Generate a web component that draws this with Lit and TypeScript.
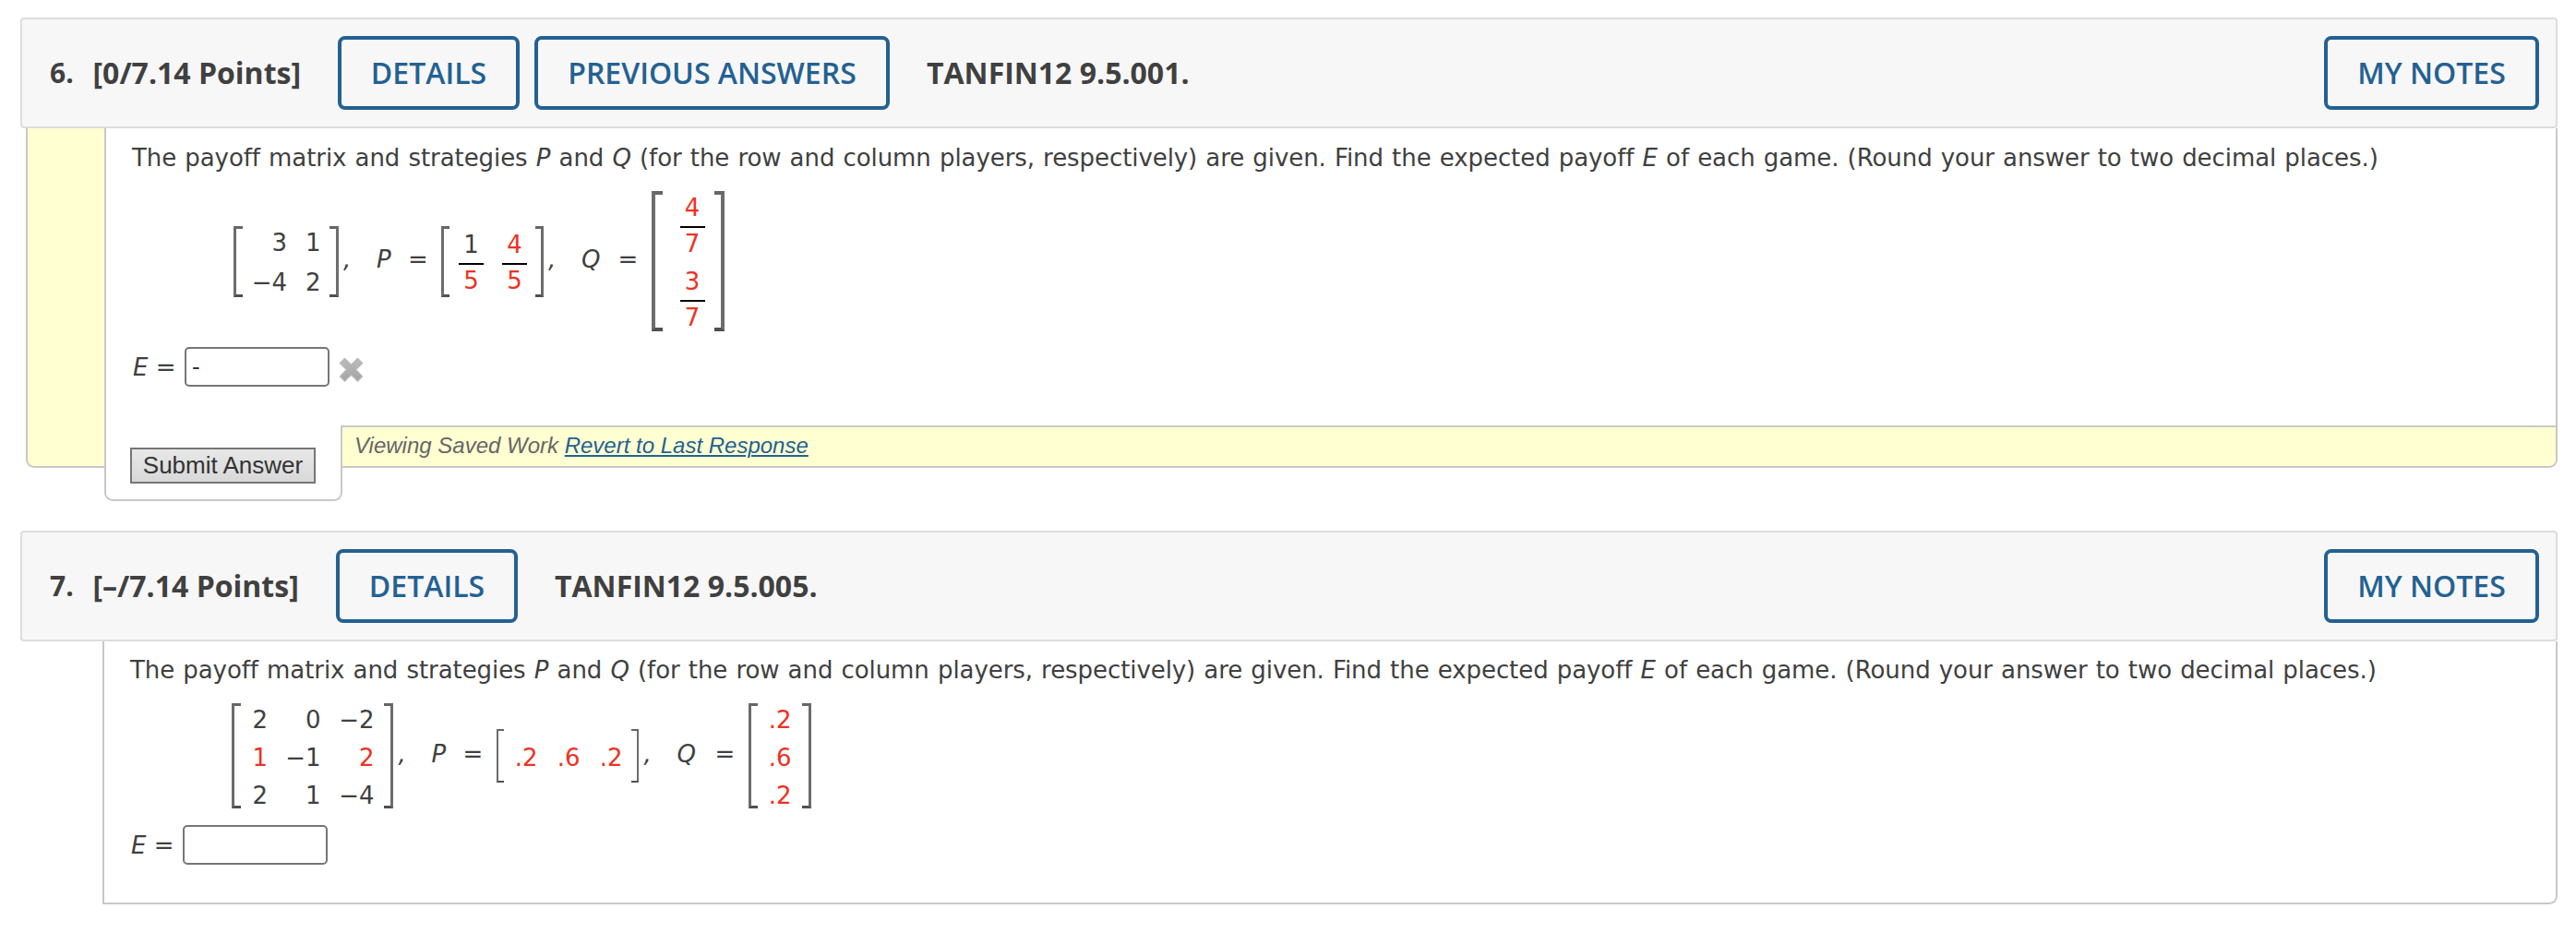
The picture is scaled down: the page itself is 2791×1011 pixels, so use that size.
import { LitElement, html, css, nothing, type TemplateResult } from "lit";
import { customElement, property } from "lit/decorators.js";

type Cell = { text: string; hot?: boolean };
type Fraction = { num: Cell; den: Cell };

const c = (text: string): Cell => ({ text });
const r = (text: string): Cell => ({ text, hot: true });

@customElement("math-matrix")
export class MathMatrix extends LitElement {
  @property({ attribute: false }) cells: Cell[] = [];
  @property({ attribute: false }) fractions: Fraction[] = [];
  @property() kind = "";

  static styles = css`
    :host { display: block; }
    .matrix { display: flex; align-items: center; }
    .bracket {
      box-sizing: border-box;
      align-self: stretch;
      width: 10px;
      border: 3px solid #6c6c6e;
      border-top-color: #666;
      border-bottom-color: #505050;
    }
    .left { border-right: 0; }
    .right { border-left: 0; }
    .grid { display: grid; text-align: right; margin-top: 4px; }
    .hot { color: #ee3124; }

    .two { height: 77px; }
    .two .grid { grid-template-columns: 48px 36.5px; padding-right: 9.5px; line-height: 43px; }

    .three { height: 114px; }
    .three .grid { grid-template-columns: 29px 57.5px 58px; padding-right: 10px; line-height: 41px; }

    .row { height: 58px; }
    .row .bracket { width: 8px; border-width: 2px; }
    .row .left { border-right: 0; }
    .row .right { border-left: 0; }
    .row .grid { grid-template-columns: 37px 46px 46px; padding-right: 9px; line-height: 41px; }

    .col { height: 114px; }
    .col .grid { grid-template-columns: 37px; padding-right: 11px; line-height: 41px; }

    .fracs { display: flex; }
    .frac { width: 27px; text-align: center; line-height: 28px; }
    .bar { height: 2px; margin: 6px 0 3px; background: #000; }

    .frow { height: 77px; }
    .frow .fracs { gap: 20px; padding: 3px 9px 0 10px; }
    .frow .bracket { width: 9px; }
    .frow .left { border-right: 0; }
    .frow .right { border-left: 0; }

    .fcol { height: 152px; }
    .fcol .fracs { flex-direction: column; gap: 13px; padding: 3px 10px 0 19px; }
    .fcol .bracket { width: 11px; border-width: 4px; }
    .fcol .left { border-right: 0; width: 12px; }
    .fcol .right { border-left: 0; }
  `;

  private cell(v: Cell) {
    return html`<div class=${v.hot ? "hot" : ""}>${v.text}</div>`;
  }

  render() {
    return html`
      <div class="matrix ${this.kind}">
        <div class="bracket left"></div>
        ${this.fractions.length
          ? html`<div class="fracs">
              ${this.fractions.map(
                (f) => html`<div class="frac">${this.cell(f.num)}<div class="bar"></div>${this.cell(f.den)}</div>`
              )}
            </div>`
          : html`<div class="grid">${this.cells.map((v) => this.cell(v))}</div>`}
        <div class="bracket right"></div>
      </div>
    `;
  }
}

@customElement("question-header")
export class QuestionHeader extends LitElement {
  @property() number = "";
  @property() points = "";
  @property() code = "";
  @property({ type: Boolean }) previous = false;

  static styles = css`
    :host { display: block; }
    .header {
      box-sizing: border-box;
      height: 120px;
      display: flex;
      align-items: center;
      padding: 0 18px 0 30px;
      background: #f7f7f7;
      border: 2px solid #ddd;
      border-radius: 4px;
      font: 700 32px/44px "Open Sans", sans-serif;
      color: #404040;
      white-space: nowrap;
    }
    .number { width: 46.5px; font-size: 30px; }
    .points { width: 263.5px; }
    .points.graded { width: 265.500px; }
    .btn {
      box-sizing: border-box;
      height: 80px;
      padding: 0;
      border: 4px solid #236192;
      border-radius: 8px;
      background: transparent;
      color: #236192;
      font: 600 32px/44px "Open Sans", sans-serif;
    }
    .details { width: 197px; }
    .prev { width: 385px; margin-left: 16px; }
    .notes { width: 233px; margin-left: auto; }
    .code { margin-left: 40px; }
  `;

  render() {
    return html`
      <div class="header">
        <span class="number">${this.number}</span>
        <span class="points ${this.previous ? "graded" : ""}">${this.points}</span>
        <button class="btn details">DETAILS</button>
        ${this.previous ? html`<button class="btn prev">PREVIOUS ANSWERS</button>` : nothing}
        <span class="code">${this.code}</span>
        <button class="btn notes">MY NOTES</button>
      </div>
    `;
  }
}

@customElement("app-root")
export class AppRoot extends LitElement {
  static styles = css`
    :host {
      display: block;
      box-sizing: border-box;
      height: 1011px;
      padding: 19px 20px 0 22px;
      overflow: hidden;
      background: #fff;
      color: #404040;
      font: 26px/32px "DejaVu Sans", sans-serif;
    }
    .panel {
      box-sizing: border-box;
      border: 2px solid #c8c8c8;
      border-top: 0;
    }
    .saved {
      display: flex;
      height: 368px;
      margin: 0 0 68px 6px;
      padding-left: 83px;
      background: #ffffd2;
      border-radius: 0 0 9px 9px;
    }
    .column { flex: 1; display: flex; flex-direction: column; }
    .body { box-sizing: border-box; padding: 16px 0 0 28px; }
    .saved .body { height: 322px; background: #fff; border-left: 2px solid #c8c8c8; }
    .open { height: 285px; margin-left: 89px; border-bottom-right-radius: 9px; }
    .open .body { padding-top: 15px; }
    .prompt { white-space: nowrap; letter-spacing: -0.07px; word-spacing: 0.97px; }
    .math { display: flex; align-items: center; margin: 20px 0 0 110px; }
    .op { flex: none; margin-bottom: 4px; }
    .comma { width: 36px; padding-left: 5px; font-style: italic; }
    .open .comma { padding-left: 6px; }
    .p { width: 34px; font-style: italic; }
    .q { width: 39.5px; font-style: italic; }
    .open .q { width: 41px; }
    .eq { width: 36px; }
    .answer { display: flex; align-items: center; margin-top: 17px; height: 43px; }
    .open .answer { margin-top: 18px; }
    .label { box-sizing: border-box; width: 57px; padding-left: 1px; white-space: pre; }
    .field {
      box-sizing: border-box;
      width: 157px;
      height: 43px;
      margin: 0;
      padding: 2px 6px;
      border: 2px solid #767676;
      border-radius: 5px;
      background: #fff;
      color: #333;
      font: 26px "Liberation Sans", Arial, sans-serif;
    }
    .wrong { display: block; width: 28px; height: 30px; margin: 6px 0 0 9px; }
    .footer { display: flex; align-items: flex-start; }
    .tab {
      box-sizing: border-box;
      width: 258px;
      height: 82px;
      margin-bottom: -38px;
      padding: 24px 0 0 26px;
      background: #fff;
      border: 2px solid #c8c8c8;
      border-top: 0;
      border-radius: 0 0 9px 9px;
    }
    .submit {
      display: block;
      width: 201px;
      height: 39px;
      padding: 0 0 2px;
      border: 2px solid #767676;
      background: linear-gradient(#e8e8e8, #d8d8d8);
      color: #333;
      font: 26px/32px "Liberation Sans", Arial, sans-serif;
    }
    .notice {
      flex: 1;
      box-sizing: border-box;
      height: 44px;
      padding: 6px 0 0 13px;
      border-top: 2px solid #c8c8c8;
      color: #666;
      font: italic 24px/28px "Liberation Sans", Arial, sans-serif;
    }
    .notice a { color: #236192; text-decoration: underline; text-decoration-thickness: 2px; text-underline-offset: 2px; }
  `;

  private prompt(): TemplateResult {
    return html`<div class="prompt">The payoff matrix and strategies <i>P</i> and <i>Q</i> (for the row and column players, respectively) are given. Find the expected payoff <i>E</i> of each game. (Round your answer to two decimal places.)</div>`;
  }

  private assign(name: "P" | "Q"): TemplateResult {
    return html`<span class="op comma">,</span><span class="op ${name.toLowerCase()}">${name}</span><span class="op eq">=</span>`;
  }

  render() {
    return html`
      <question-header number="6." points="[0/7.14 Points]" code="TANFIN12 9.5.001." previous></question-header>
      <div class="panel saved">
        <div class="column">
          <div class="body">
            ${this.prompt()}
            <div class="math">
              <math-matrix kind="two" .cells=${[c("3"), c("1"), c("−4"), c("2")]}></math-matrix>
              ${this.assign("P")}
              <math-matrix kind="frow" .fractions=${[{ num: c("1"), den: r("5") }, { num: r("4"), den: r("5") }]}></math-matrix>
              ${this.assign("Q")}
              <math-matrix kind="fcol" .fractions=${[{ num: r("4"), den: r("7") }, { num: r("3"), den: r("7") }]}></math-matrix>
            </div>
            <div class="answer">
              <span class="label"><i>E</i> =</span>
              <input class="field" .value=${"-"} />
              <svg class="wrong" viewBox="0 0 28 30">
                <defs>
                  <linearGradient id="g" x1="0" y1="0" x2="0" y2="1">
                    <stop offset="0" stop-color="#bdbdbd" />
                    <stop offset="1" stop-color="#a2a2a2" />
                  </linearGradient>
                </defs>
                <path
                  fill="url(#g)"
                  stroke="#b8b8b8"
                  stroke-width="1.5"
                  stroke-linejoin="round"
                  d="M2.500 7.500 7.500 2.500 14.500 9.500 21.500 2.500 26.500 7.500 19.500 14.500 26.500 22 21.500 27 14.500 20 7.500 27 2.500 22 9.500 14.500Z"
                />
              </svg>
            </div>
          </div>
          <div class="footer">
            <div class="tab"><button class="submit">Submit Answer</button></div>
            <div class="notice">Viewing Saved Work <a>Revert to Last Response</a></div>
          </div>
        </div>
      </div>

      <question-header number="7." points="[–/7.14 Points]" code="TANFIN12 9.5.005."></question-header>
      <div class="panel open">
        <div class="body">
          ${this.prompt()}
          <div class="math">
            <math-matrix
              kind="three"
              .cells=${[c("2"), c("0"), c("−2"), r("1"), c("−1"), r("2"), c("2"), c("1"), c("−4")]}
            ></math-matrix>
            ${this.assign("P")}
            <math-matrix kind="row" .cells=${[r(".2"), r(".6"), r(".2")]}></math-matrix>
            ${this.assign("Q")}
            <math-matrix kind="col" .cells=${[r(".2"), r(".6"), r(".2")]}></math-matrix>
          </div>
          <div class="answer">
            <span class="label"><i>E</i> =</span>
            <input class="field" />
          </div>
        </div>
      </div>
    `;
  }
}
